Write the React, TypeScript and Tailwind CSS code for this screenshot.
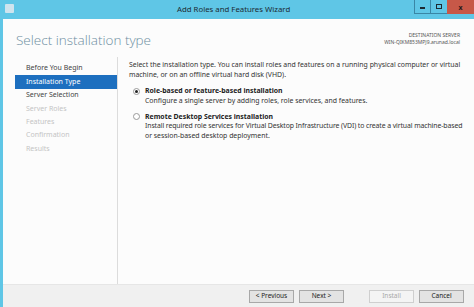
import React from "react";

const steps = [
  { label: "Before You Begin", state: "done" },
  { label: "Installation Type", state: "active" },
  { label: "Server Selection", state: "done" },
  { label: "Server Roles", state: "off" },
  { label: "Features", state: "off" },
  { label: "Confirmation", state: "off" },
  { label: "Results", state: "off" },
];

const Radio = ({ checked }: { checked?: boolean }) => (
  <span className="mt-[1.5px] flex h-[7px] w-[7px] shrink-0 items-center justify-center rounded-full border border-[#9a9a9a] bg-white">
    {checked && <span className="h-[3px] w-[3px] rounded-full bg-[#222]" />}
  </span>
);

const Btn = ({ children, disabled }: { children: React.ReactNode; disabled?: boolean }) => (
  <button
    className={
      "flex h-[13px] w-[45px] items-center justify-center border text-[6.5px] " +
      (disabled
        ? "border-[#cfcfcf] bg-[#f4f4f4] text-[#a8a8a8]"
        : "border-[#a8a8a8] bg-[#e3e3e3] text-[#222]")
    }
  >
    {children}
  </button>
);

export default function App() {
  return (
    <div className="flex h-[307px] w-[474px] flex-col overflow-hidden bg-[#5fc6e6] font-['Noto_Sans',sans-serif] text-[#1e1e1e]">
      {/* title bar */}
      <div className="flex h-[19px] w-[474px] shrink-0 items-start">
        <div className="w-[177px] shrink-0 pl-[5px] pt-[4px]">
          <div className="h-[9px] w-[9px] rounded-[1px] bg-[#cfe4ee]" />
        </div>
        <div className="w-[237px] shrink-0 pt-[4px] text-[7.8px] leading-[11px] text-[#1c2a33]">
          Add Roles and Features Wizard
        </div>
        <div className="flex h-[14px] w-[17px] shrink-0 items-center justify-center border-x border-b border-[#3a86a5]">
          <div className="mt-[3px] h-[2px] w-[5px] bg-[#1c2a33]" />
        </div>
        <div className="flex h-[14px] w-[16px] shrink-0 items-center justify-center border-b border-[#3a86a5]">
          <div className="h-[5px] w-[6px] border-[1.5px] border-[#1c2a33]" />
        </div>
        <div className="flex h-[14px] w-[27px] shrink-0 items-center justify-center bg-[#c75848] text-[7px] font-bold leading-none text-[#2a1a1a]">
          x
        </div>
      </div>

      <div className="ml-[3px] flex flex-1 flex-col bg-[#fcfcfc]">
        {/* header */}
        <div className="flex h-[38px] items-start justify-between pl-[13px] pr-[14px] pt-[11px]">
          <span className="font-['Open_Sans',sans-serif] text-[13.5px] font-light leading-[20px] text-[#6d8ea1]">
            Select installation type
          </span>
          <div className="pt-[2px] text-right text-[5px] leading-[7px] text-[#555]">
            <div>DESTINATION SERVER</div>
            <div>WIN-QIKM853MPJ9.arunad.local</div>
          </div>
        </div>

        <div className="flex flex-1">
          {/* nav */}
          <div className="w-[115px] border-r border-[#dcdcdc] pl-[12px] pt-[5px]">
            {steps.map((s) => (
              <div
                key={s.label}
                className={
                  "flex h-[13.4px] items-center pl-[11px] text-[7px] " +
                  (s.state === "active"
                    ? "bg-[#1d6fbf] text-white"
                    : s.state === "done"
                      ? "text-[#444]"
                      : "text-[#c4c4c4]")
                }
              >
                {s.label}
              </div>
            ))}
          </div>

          {/* content */}
          <div className="flex-1 whitespace-nowrap pl-[11px] pt-[3px] text-[6.9px] leading-[9.5px] text-[#333]">
            <div>Select the installation type. You can install roles and features on a running physical computer or virtual</div>
            <div>machine, or on an offline virtual hard disk (VHD).</div>
            <div className="mt-[7px] flex gap-[5px] pl-[4px]">
              <Radio checked />
              <div>
                <div className="font-bold text-[#222]">Role-based or feature-based installation</div>
                <div>Configure a single server by adding roles, role services, and features.</div>
              </div>
            </div>
            <div className="mt-[6.5px] flex gap-[5px] pl-[4px]">
              <Radio />
              <div>
                <div className="font-bold text-[#222]">Remote Desktop Services installation</div>
                <div className="tracking-[-0.1px]">
                  Install required role services for Virtual Desktop Infrastructure (VDI) to create a virtual machine-based
                </div>
                <div>or session-based desktop deployment.</div>
              </div>
            </div>
          </div>
        </div>

        {/* footer */}
        <div className="flex h-[23px] items-center justify-end gap-[5px] border-t border-[#e6e6e6] bg-[#f0f0f0] pr-[10px]">
          <Btn>&lt; Previous</Btn>
          <Btn>Next &gt;</Btn>
          <span className="w-[15px]" />
          <Btn disabled>Install</Btn>
          <Btn>Cancel</Btn>
        </div>
      </div>
    </div>
  );
}
